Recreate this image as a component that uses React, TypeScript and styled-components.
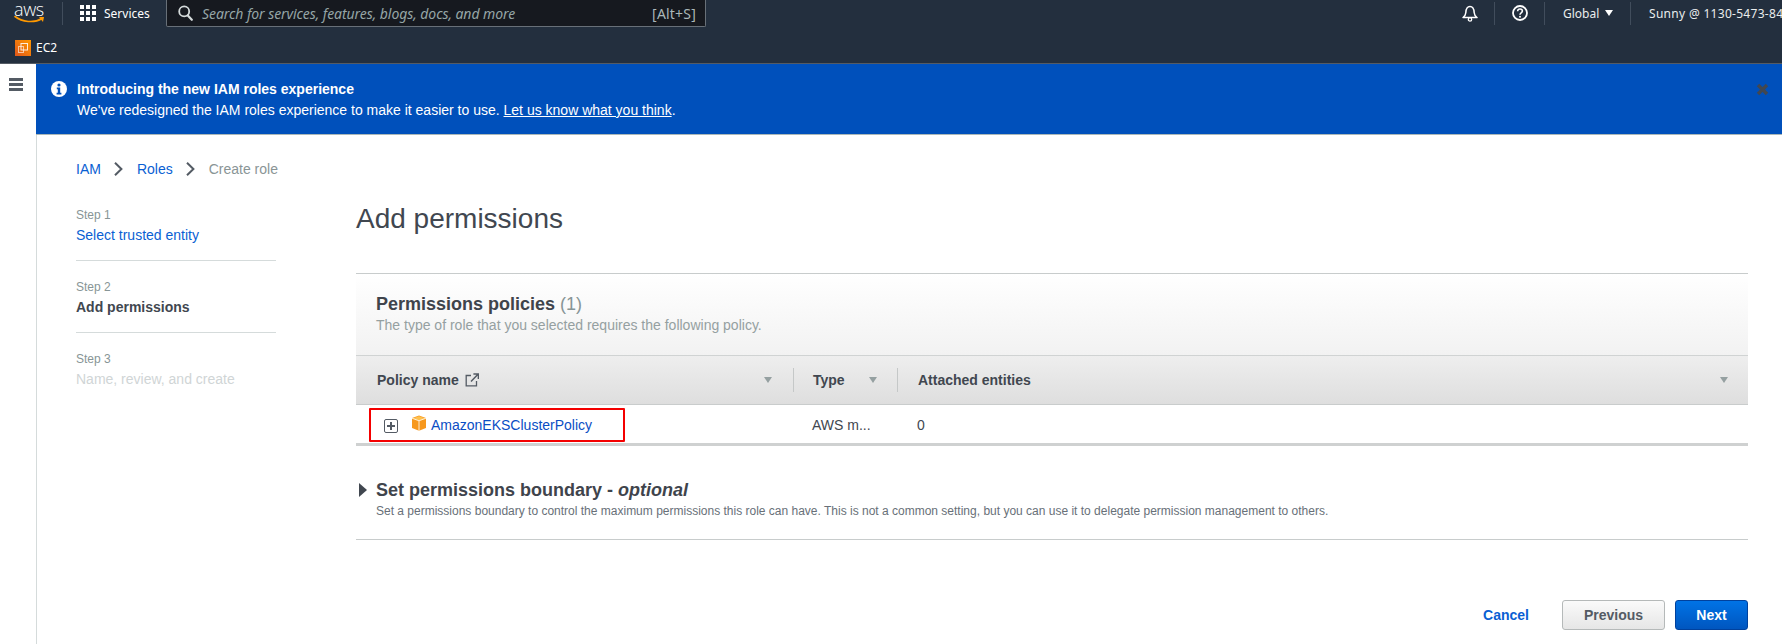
import React from 'react'
import styled, { createGlobalStyle } from 'styled-components'

const GlobalStyle = createGlobalStyle`
    html, body {
        margin : 0;
        padding : 0;
        height : 100%;
        overflow : hidden;
        background : #fff;
        font-family : "Liberation Sans", Arial, sans-serif;
    }
    #root { height : 100%; }
    * { box-sizing : border-box; }
`

const Page = styled.div`
    width : 1782px;
    height : 644px;
    display : flex;
    flex-direction : column;
    overflow : hidden;
`

const TopNav = styled.header`
    height : 64px;
    flex-shrink : 0;
    background : #232f3e;
    border-bottom : 1px solid #545b64;
    color : #fff;
    font-family : "Noto Sans", "Open Sans", sans-serif;
`

const NavRow = styled.div`
    height : 38px;
    display : flex;
    align-items : flex-start;
    overflow : hidden;
`

const NavItem = styled.div`
    height : 26px;
    display : flex;
    align-items : center;
    flex-shrink : 0;
    font-size : 12px;
    white-space : nowrap;
`

const Logo = styled(NavItem)`
    position : relative;
    width : 32px;
    margin-left : 14px;
    margin-right : 16px;
    align-items : flex-start;
`

const LogoWord = styled.span`
    font-family : "Open Sans", sans-serif;
    font-weight : 300;
    font-size : 18px;
    line-height : 18px;
    letter-spacing : -0.4px;
`

const LogoSmile = styled.svg`
    position : absolute;
    left : 0;
    top : 15px;
`

const NavDivider = styled.span`
    width : 1px;
    height : 23px;
    margin-top : 2px;
    flex-shrink : 0;
    background : #414d5c;
`

const ServicesItem = styled(NavItem)`
    margin-left : 17px;
    gap : 8px;
    width : 86px;
`

const GridIcon = styled.div`
    display : grid;
    grid-template-columns : repeat(3, 4px);
    grid-auto-rows : 4px;
    gap : 2px;
    span { background : #fff; }
`

const SearchBox = styled.div`
    width : 540px;
    height : 27px;
    flex-shrink : 0;
    display : flex;
    align-items : center;
    padding : 0 9px 0 11px;
    background : #16191f;
    border : 1px solid #687078;
    border-top : 0;
    border-radius : 0 0 2px 2px;
    color : #aab7b8;
    font-size : 14px;
`

const SearchHint = styled.span`
    font-style : italic;
    margin-left : 9px;
    flex : 1;
    color : #95a5a6;
    letter-spacing : -0.07px;
`

const SearchKey = styled.span`
    letter-spacing : 0.2px;
`

const NavRight = styled.div`
    margin-left : 756px;
    display : flex;
    align-items : flex-start;
    flex-shrink : 0;
`

const IconSlot = styled(NavItem)`
    width : ${p => p.$w}px;
    justify-content : flex-start;
    padding-left : ${p => p.$pad}px;
`

const GlobalItem = styled(NavItem)`
    width : 85px;
    padding-left : 18px;
    gap : 6px;
    color : #eaeded;
`

const Caret = styled.span`
    width : 0;
    height : 0;
    border-left : ${p => p.$size}px solid transparent;
    border-right : ${p => p.$size}px solid transparent;
    border-top : ${p => p.$size + 2}px solid ${p => p.$color};
    flex-shrink : 0;
`

const UserItem = styled(NavItem)`
    padding-left : 18px;
    color : #eaeded;
    letter-spacing : 0.3px;
`

const SubRow = styled.div`
    height : 25px;
    display : flex;
    align-items : flex-start;
    gap : 5px;
    padding : 2px 0 0 15px;
    font-size : 12px;
    line-height : 16px;
`

const Shell = styled.div`
    flex : 1;
    display : flex;
    min-height : 0;
`

const SideRail = styled.aside`
    width : 37px;
    flex-shrink : 0;
    border-right : 1px solid #d5dbdb;
    padding : 14px 0 0 9px;
`

const MenuLines = styled.div`
    width : 14px;
    display : flex;
    flex-direction : column;
    gap : 2px;
    span {
        height : 3px;
        background : #545b64;
    }
`

const Main = styled.main`
    flex : 1;
    min-width : 0;
    display : flex;
    flex-direction : column;
`

const Banner = styled.section`
    position : relative;
    height : 71px;
    flex-shrink : 0;
    margin-left : -1px;
    background : #0050bb;
    border-bottom : 1px solid #aab7b8;
    color : #fff;
    display : flex;
    gap : 10px;
    padding : 17px 0 0 15px;
    font-size : 14px;
`

const BannerTitle = styled.div`
    font-weight : 700;
    line-height : 17px;
    margin-bottom : 3px;
`

const BannerLine = styled.div`
    line-height : 18px;
    a { color : #fff; text-decoration : underline; }
`

const BannerClose = styled.svg`
    position : absolute;
    right : 13px;
    top : 19px;
`

const Content = styled.div`
    flex : 1;
    padding : 24px 34px 0 39px;
`

const Crumbs = styled.nav`
    height : 20px;
    display : flex;
    align-items : center;
    font-size : 14px;
    color : #0a5fd3;
`

const CrumbSep = styled.svg`
    margin : 0 14px 0 13px;
`

const CrumbCurrent = styled.span`
    color : #8a9596;
`

const Columns = styled.div`
    display : grid;
    grid-template-columns : 200px 1fr;
    column-gap : 80px;
    margin-top : 10px;
`

const StepList = styled.ol`
    list-style : none;
    margin : 0;
    padding : 0;
`

const StepItem = styled.li`
    height : 72px;
    padding-top : 18px;
    border-bottom : ${p => (p.$last ? '0' : '1px solid #d5dbdb')};
`

const StepNo = styled.div`
    font-size : 12px;
    line-height : 16px;
    color : #879596;
`

const StepName = styled.div<{ $state : string }>`
    font-size : 14px;
    line-height : 18px;
    margin-top : 3px;
    font-weight : ${p => (p.$state === 'active' ? 700 : 400)};
    color : ${p => (p.$state === 'done' ? '#0a5fd3' : p.$state === 'active' ? '#414750' : '#d0d5d6')};
`

const Heading = styled.h1`
    margin : 14px 0 0;
    height : 32px;
    font-size : 28px;
    line-height : 32px;
    font-weight : 400;
    color : #414750;
`

const Panel = styled.section`
    margin-top : 38px;
    border-top : 1px solid #c8cccc;
`

const PanelHead = styled.div`
    height : 82px;
    padding : 20px 0 0 20px;
    background : linear-gradient(#ffffff, #f2f2f2);
    border-bottom : 1px solid #d0d3d3;
`

const PanelTitle = styled.h2`
    margin : 0;
    font-size : 18px;
    line-height : 20px;
    font-weight : 700;
    color : #3f444c;
    span { font-weight : 400; color : #879596; }
`

const PanelSub = styled.p`
    margin : 2px 0 0;
    font-size : 14px;
    line-height : 18px;
    color : #95a0a1;
`

const TableHead = styled.div`
    height : 49px;
    display : grid;
    grid-template-columns : 438px 104px 1fr;
    align-items : center;
    background : linear-gradient(#eeeeee, #dedede);
    border-bottom : 1px solid #c9cccc;
`

const HeadCell = styled.div`
    height : 24px;
    display : flex;
    align-items : center;
    justify-content : space-between;
    padding : ${p => p.$pad};
    border-right : ${p => (p.$line ? '1px solid #c5c8c8' : '0')};
    font-size : 14px;
    font-weight : 700;
    color : #414750;
`

const HeadLabel = styled.span`
    display : flex;
    align-items : center;
    gap : 6px;
`

const TableRow = styled.div`
    height : 41px;
    display : grid;
    grid-template-columns : 438px 104px 1fr;
    align-items : center;
    padding-top : 1px;
    border-bottom : 3px solid #cfd1d1;
    font-size : 14px;
    color : #414750;
`

const Marked = styled.div`
    width : 256px;
    height : 34px;
    margin-left : 13px;
    border : 2px solid #f40000;
    border-radius : 1px;
    display : flex;
    align-items : center;
    padding-left : 13px;
`

const ExpandBox = styled.span`
    width : 14px;
    height : 14px;
    border : 1px solid #545b64;
    border-radius : 2px;
    position : relative;
    margin-top : 2px;
    flex-shrink : 0;
    &::before, &::after {
        content : '';
        position : absolute;
        background : #545b64;
    }
    &::before { left : 2px; right : 2px; top : 5px; height : 2px; }
    &::after { top : 2px; bottom : 2px; left : 5px; width : 2px; }
`

const PolicyIcon = styled.svg`
    margin : -4px 4px 0 13px;
    flex-shrink : 0;
`

const PolicyLink = styled.a`
    color : #0a4ec4;
    text-decoration : none;
`

const BodyCell = styled.div`
    padding-left : ${p => p.$pad}px;
`

const Boundary = styled.section`
    margin-top : 35px;
    height : 59px;
    border-bottom : 1px solid #c8cccc;
    position : relative;
    padding-left : 20px;
`

const BoundaryCaret = styled.span`
    position : absolute;
    left : 3px;
    top : 2px;
    width : 0;
    height : 0;
    border-top : 7px solid transparent;
    border-bottom : 7px solid transparent;
    border-left : 8px solid #414750;
`

const BoundaryTitle = styled.h2`
    margin : 0;
    font-size : 18px;
    line-height : 18px;
    font-weight : 700;
    color : #3f444c;
    em { font-style : italic; }
`

const BoundarySub = styled.p`
    margin : 4px 0 0;
    font-size : 12px;
    line-height : 16px;
    color : #687078;
`

const Footer = styled.footer`
    margin-top : 60px;
    display : flex;
    justify-content : flex-end;
    align-items : center;
`

const CancelLink = styled.a`
    font-size : 14px;
    font-weight : 700;
    color : #0a5fd3;
    margin-right : 33px;
`

const Button = styled.button`
    height : 30px;
    width : ${p => p.$w}px;
    padding : 0;
    border-radius : 3px;
    font-family : inherit;
    font-size : 14px;
    font-weight : 700;
    border : 1px solid ${p => (p.$primary ? '#00419d' : '#b5b9b9')};
    background : ${p => (p.$primary ? 'linear-gradient(#0073e6, #0056bf)' : 'linear-gradient(#fafafa, #e6e6e6)')};
    color : ${p => (p.$primary ? '#fff' : '#545b64')};
    margin-left : ${p => p.$gap}px;
`

const steps = [
    { no : 'Step 1', name : 'Select trusted entity', state : 'done' },
    { no : 'Step 2', name : 'Add permissions', state : 'active' },
    { no : 'Step 3', name : 'Name, review, and create', state : 'todo' },
]

const App = () => {
    return (
        <Page>
            <GlobalStyle />
            <TopNav>
                <NavRow>
                    <Logo>
                        <LogoWord>aws</LogoWord>
                        <LogoSmile width="32" height="9" viewBox="0 0 32 9">
                            <path d="M1 1.5C8 7 20 8.5 28 3.5" fill="none" stroke="#f90" strokeWidth="1.6" strokeLinecap="round" />
                            <path d="M25 2h5l-1 5z" fill="#f90" />
                        </LogoSmile>
                    </Logo>
                    <NavDivider />
                    <ServicesItem>
                        <GridIcon>
                            {Array.from({ length : 9 }).map((_, i) => <span key={i} />)}
                        </GridIcon>
                        <span>Services</span>
                    </ServicesItem>
                    <SearchBox>
                        <svg width="15" height="16" viewBox="0 0 15 16">
                            <circle cx="6.2" cy="6.4" r="5" fill="none" stroke="#d5dbdb" strokeWidth="1.8" />
                            <path d="M9.8 10.4l4 4.4" stroke="#d5dbdb" strokeWidth="2.2" strokeLinecap="round" />
                        </svg>
                        <SearchHint>Search for services, features, blogs, docs, and more</SearchHint>
                        <SearchKey>[Alt+S]</SearchKey>
                    </SearchBox>
                    <NavRight>
                        <IconSlot $w={32} $pad={0}>
                            <svg width="16" height="17" viewBox="0 0 16 17">
                                <path d="M1 12.5c1.8-1.2 2.6-2.6 2.8-4.8C4 4.4 5.6 1.6 8 1.6s4 2.8 4.2 6.1c.2 2.2 1 3.6 2.8 4.8z" fill="none" stroke="#fff" strokeWidth="1.5" strokeLinejoin="round" />
                                <circle cx="8" cy="14.4" r="1.7" fill="none" stroke="#fff" strokeWidth="1.3" />
                            </svg>
                        </IconSlot>
                        <NavDivider />
                        <IconSlot $w={49} $pad={17}>
                            <svg width="16" height="16" viewBox="0 0 16 16">
                                <circle cx="8" cy="8" r="7" fill="none" stroke="#fff" strokeWidth="1.8" />
                                <path d="M5.6 6.2C5.7 4.8 6.7 4 8 4s2.4.9 2.4 2.1c0 1.8-2.4 1.8-2.4 3.6" fill="none" stroke="#fff" strokeWidth="1.6" />
                                <circle cx="8" cy="11.8" r="1" fill="#fff" />
                            </svg>
                        </IconSlot>
                        <NavDivider />
                        <GlobalItem>
                            <span>Global</span>
                            <Caret $size={4} $color="#fff" />
                        </GlobalItem>
                        <NavDivider />
                        <UserItem>Sunny @ 1130-5473-8471</UserItem>
                    </NavRight>
                </NavRow>
                <SubRow>
                    <svg width="16" height="16" viewBox="0 0 16 16">
                        <defs>
                            <linearGradient id="ec2" x1="0" y1="1" x2="1" y2="0">
                                <stop offset="0" stopColor="#e0561b" />
                                <stop offset="1" stopColor="#ff9900" />
                            </linearGradient>
                        </defs>
                        <rect width="16" height="16" fill="url(#ec2)" />
                        <rect x="6" y="3.5" width="6.5" height="6.5" fill="none" stroke="#fff" strokeWidth="1" opacity="0.85" />
                        <rect x="3.5" y="6.5" width="5" height="6" fill="none" stroke="#fff" strokeWidth="1" opacity="0.6" />
                    </svg>
                    <span>EC2</span>
                </SubRow>
            </TopNav>
            <Shell>
                <SideRail>
                    <MenuLines>
                        <span /><span /><span />
                    </MenuLines>
                </SideRail>
                <Main>
                    <Banner>
                        <svg width="16" height="16" viewBox="0 0 16 16">
                            <circle cx="8" cy="8" r="8" fill="#fff" />
                            <circle cx="8" cy="4" r="1.6" fill="#0050bb" />
                            <path d="M5.8 6.6h3.4v5.2h1.2v1.6H5.6v-1.6h1.2V8.2h-1z" fill="#0050bb" />
                        </svg>
                        <div>
                            <BannerTitle>Introducing the new IAM roles experience</BannerTitle>
                            <BannerLine>We've redesigned the IAM roles experience to make it easier to use. <a href="#">Let us know what you think</a>.</BannerLine>
                        </div>
                        <BannerClose width="13" height="13" viewBox="0 0 13 13">
                            <path d="M2 2l9 9M11 2l-9 9" stroke="#414750" strokeWidth="3.4" />
                        </BannerClose>
                    </Banner>
                    <Content>
                        <Crumbs>
                            <span>IAM</span>
                            <CrumbSep width="9" height="14" viewBox="0 0 9 14">
                                <path d="M1 .8l6.4 6.2L1 13.2" fill="none" stroke="#545b64" strokeWidth="2" />
                            </CrumbSep>
                            <span>Roles</span>
                            <CrumbSep width="9" height="14" viewBox="0 0 9 14">
                                <path d="M1 .8l6.4 6.2L1 13.2" fill="none" stroke="#545b64" strokeWidth="2" />
                            </CrumbSep>
                            <CrumbCurrent>Create role</CrumbCurrent>
                        </Crumbs>
                        <Columns>
                            <StepList>
                                {steps.map((step, i) => (
                                    <StepItem key={step.no} $last={i === steps.length - 1}>
                                        <StepNo>{step.no}</StepNo>
                                        <StepName $state={step.state}>{step.name}</StepName>
                                    </StepItem>
                                ))}
                            </StepList>
                            <div>
                                <Heading>Add permissions</Heading>
                                <Panel>
                                    <PanelHead>
                                        <PanelTitle>Permissions policies <span>(1)</span></PanelTitle>
                                        <PanelSub>The type of role that you selected requires the following policy.</PanelSub>
                                    </PanelHead>
                                    <TableHead>
                                        <HeadCell $line $pad="0 21px 0 21px">
                                            <HeadLabel>
                                                Policy name
                                                <svg width="14" height="14" viewBox="0 0 14 14">
                                                    <path d="M6 2.5H1.2v10.3h10.3V8" fill="none" stroke="#545b64" strokeWidth="1.3" />
                                                    <path d="M6 8.5L12.5 1.8M8.4 1h5v5" fill="none" stroke="#545b64" strokeWidth="1.5" />
                                                </svg>
                                            </HeadLabel>
                                            <Caret $size={4} $color="#95a0a1" />
                                        </HeadCell>
                                        <HeadCell $line $pad="0 20px 0 19px">
                                            <span>Type</span>
                                            <Caret $size={4} $color="#95a0a1" />
                                        </HeadCell>
                                        <HeadCell $pad="0 20px 0 20px">
                                            <span>Attached entities</span>
                                            <Caret $size={4} $color="#95a0a1" />
                                        </HeadCell>
                                    </TableHead>
                                    <TableRow>
                                        <Marked>
                                            <ExpandBox />
                                            <PolicyIcon width="16" height="16" viewBox="0 0 16 16">
                                                <path d="M8 0.5L15 3v10l-7 2.8L1 13V3z" fill="#f7981d" />
                                                <path d="M1.5 3.4L8 5.8l6.5-2.4L8 1.2z" fill="#ffc04d" />
                                                <path d="M1 3.2l7 2.6 7-2.6M8 5.8v10" fill="none" stroke="#fff" strokeWidth="0.8" />
                                            </PolicyIcon>
                                            <PolicyLink href="#">AmazonEKSClusterPolicy</PolicyLink>
                                        </Marked>
                                        <BodyCell $pad={18}>AWS m...</BodyCell>
                                        <BodyCell $pad={19}>0</BodyCell>
                                    </TableRow>
                                </Panel>
                                <Boundary>
                                    <BoundaryCaret />
                                    <BoundaryTitle>Set permissions boundary - <em>optional</em></BoundaryTitle>
                                    <BoundarySub>Set a permissions boundary to control the maximum permissions this role can have. This is not a common setting, but you can use it to delegate permission management to others.</BoundarySub>
                                </Boundary>
                                <Footer>
                                    <CancelLink>Cancel</CancelLink>
                                    <Button $w={103} $gap={0}>Previous</Button>
                                    <Button $w={73} $gap={10} $primary>Next</Button>
                                </Footer>
                            </div>
                        </Columns>
                    </Content>
                </Main>
            </Shell>
        </Page>
    )
}

export default App
